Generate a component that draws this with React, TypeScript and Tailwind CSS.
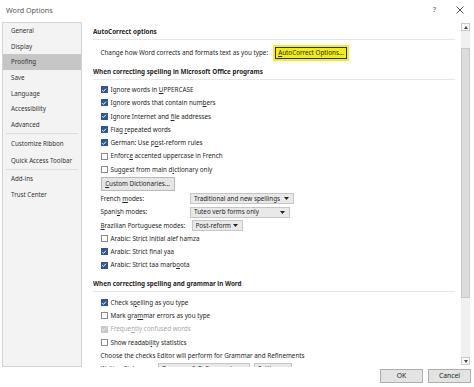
import React from 'react';

const font = { fontFamily: '"Noto Sans", "Open Sans", sans-serif' };

function U({ children }: { children: React.ReactNode }) {
  return <span className="underline underline-offset-[1px]">{children}</span>;
}

function Check({ checked, disabled }: { checked?: boolean; disabled?: boolean }) {
  if (checked) {
    return (
      <span
        className={`flex h-[7px] w-[7px] shrink-0 items-center justify-center ${
          disabled ? 'bg-[#c9c9c9]' : 'bg-[#2b5797]'
        }`}
      >
        <svg width="6" height="6" viewBox="0 0 10 10">
          <path d="M2 5.2 L4.2 7.3 L8.2 2.8" fill="none" stroke={disabled ? '#f2f2f2' : '#ffffff'} strokeWidth="1.6" />
        </svg>
      </span>
    );
  }
  return <span className="h-[7px] w-[7px] shrink-0 border border-[#8a8a8a] bg-white" />;
}

function Row({ checked, disabled, children }: { checked?: boolean; disabled?: boolean; children: React.ReactNode }) {
  return (
    <div className={`flex h-[13.3px] items-center gap-[3px] whitespace-nowrap pl-[7.5px] ${disabled ? 'text-[#a8a8a8]' : ''}`}>
      <Check checked={checked} disabled={disabled} />
      <span>{children}</span>
    </div>
  );
}

function Select({ label, value, left, width }: { label: React.ReactNode; value: string; left: string; width: string }) {
  return (
    <div className="flex h-[13.3px] items-center whitespace-nowrap pl-[7.5px]">
      <span className={left}>{label}</span>
      <div className={`flex h-[11px] items-center justify-between border border-[#c6c6c6] bg-[#e9e9e9] pl-[3px] pr-[4px] ${width}`}>
        <span className="overflow-hidden">{value}</span>
        <svg width="5" height="3" viewBox="0 0 5 3" className="shrink-0">
          <path d="M0 0 L5 0 L2.5 3 Z" fill="#222" />
        </svg>
      </div>
    </div>
  );
}

const navTop = ['General', 'Display', 'Proofing', 'Save', 'Language', 'Accessibility', 'Advanced'];

export default function App() {
  return (
    <div className="h-[387px] w-[474px] overflow-hidden bg-white text-[6.3px] text-[#262626]" style={font}>
      {/* title bar */}
      <div className="flex h-[20px] items-center justify-between pl-[6px] pr-[10px] text-[7.2px] text-[#555]">
        <span>Word Options</span>
        <div className="flex items-center gap-[20px]">
          <span className="text-[7.5px]">?</span>
          <svg width="8" height="8" viewBox="0 0 8 8">
            <path d="M0.5 0.5 L7.5 7.5 M7.5 0.5 L0.5 7.5" stroke="#444" strokeWidth="0.9" />
          </svg>
        </div>
      </div>

      <div className="flex h-[347px]">
        {/* nav */}
        <div className="ml-[2px] mt-[2px] h-[345px] w-[80px] shrink-0 whitespace-nowrap border border-[#d4d4d4] bg-[#f3f3f3] text-[6.2px] text-[#333]">
          {navTop.map(item => (
            <div
              key={item}
              className={`flex h-[15.6px] items-center pl-[8px] ${item === 'Proofing' ? 'bg-[#c6c6c6]' : ''}`}
            >
              {item}
            </div>
          ))}
          <div className="mx-[3px] my-[1px] border-t border-[#dedede]" />
          <div className="flex h-[16.8px] items-center pl-[8px]">Customize Ribbon</div>
          <div className="flex h-[16.8px] items-center pl-[8px]">Quick Access Toolbar</div>
          <div className="mx-[3px] border-t border-[#dedede]" />
          <div className="flex h-[16.8px] items-center pl-[8px]">Add-ins</div>
          <div className="flex h-[16.8px] items-center pl-[8px]">Trust Center</div>
        </div>

        {/* content */}
        <div className="ml-[11px] h-[347px] w-[362px] shrink-0 overflow-hidden">
          <div className="mt-[5px] flex h-[14px] items-center font-bold">AutoCorrect options</div>
          <div className="border-t border-[#e6e6e6]" />
          <div className="mt-[4px] flex h-[17px] items-center whitespace-nowrap pl-[7.5px]">
            <span className="mr-[5px]">Change how Word corrects and formats text as you type:</span>
            <div className="flex h-[16px] w-[76px] items-center bg-[#f4f01e] p-[2px]">
              <div className="flex h-full w-full items-center justify-center border border-[#2a2a1a] bg-[#f2ee10]">
                <span>
                  <U>A</U>utoCorrect Options...
                </span>
              </div>
            </div>
          </div>

          <div className="mt-[4px] flex h-[14px] items-center font-bold">When correcting spelling in Microsoft Office programs</div>
          <div className="border-t border-[#e6e6e6]" />
          <div className="mt-[3px]">
            <Row checked>
              Ignore words in <U>U</U>PPERCASE
            </Row>
            <Row checked>
              Ignore words that contain num<U>b</U>ers
            </Row>
            <Row checked>
              Ignore Internet and <U>f</U>ile addresses
            </Row>
            <Row checked>
              Flag <U>r</U>epeated words
            </Row>
            <Row checked>
              German: Use p<U>o</U>st-reform rules
            </Row>
            <Row>
              Enforc<U>e</U> accented uppercase in French
            </Row>
            <Row>
              Suggest from main d<U>i</U>ctionary only
            </Row>
          </div>
          <div className="mt-[1px] pl-[7.5px]">
            <div className="flex h-[14px] w-[74px] items-center justify-center whitespace-nowrap border border-[#b9b9b9] bg-[#e6e6e6]">
              <span>
                <U>C</U>ustom Dictionaries...
              </span>
            </div>
          </div>
          <div className="mt-[1px]">
            <Select
              label={
                <>
                  French <U>m</U>odes:
                </>
              }
              value="Traditional and new spellings"
              left="w-[89.5px]"
              width="w-[104px]"
            />
            <Select
              label={
                <>
                  Spani<U>s</U>h modes:
                </>
              }
              value="Tuteo verb forms only"
              left="w-[89.5px]"
              width="w-[100px]"
            />
            <Select
              label={
                <>
                  <U>B</U>razilian Portuguese modes:
                </>
              }
              value="Post-reform"
              left="w-[91px]"
              width="w-[51px]"
            />
            <Row>Arabic: Strict initial alef hamza</Row>
            <Row checked>Arabic: Strict final yaa</Row>
            <Row checked>
              Arabic: Strict taa marb<U>o</U>ota
            </Row>
          </div>

          <div className="mt-[5px] flex h-[14px] items-center font-bold">When correcting spelling and grammar in Word</div>
          <div className="border-t border-[#e6e6e6]" />
          <div className="mt-[4px]">
            <Row checked>
              Check s<U>p</U>elling as you type
            </Row>
            <Row>
              Mark gra<U>m</U>mar errors as you type
            </Row>
            <Row checked disabled>
              Freque<U>n</U>tly confused words
            </Row>
            <Row>
              Show readabi<U>l</U>ity statistics
            </Row>
            <div className="flex h-[13.3px] items-center whitespace-nowrap pl-[7.5px]">
              Choose the checks Editor will perform for Grammar and Refinements
            </div>
            <div className="flex h-[13.3px] items-center whitespace-nowrap pl-[7.5px]">
              <span className="w-[57px]">Writing Style:</span>
              <div className="flex h-[11px] w-[92px] items-center justify-between border border-[#c6c6c6] bg-[#e9e9e9] pl-[3px] pr-[4px]">
                <span>Grammar &amp; Refinements</span>
                <span>▾</span>
              </div>
              <div className="ml-[4px] flex h-[11px] w-[38px] items-center justify-center border border-[#c6c6c6] bg-[#e9e9e9]">
                Settings...
              </div>
            </div>
          </div>
        </div>

        {/* scrollbar */}
        <div className="ml-[6px] mt-[3px] flex h-[342px] w-[9px] shrink-0 flex-col bg-[#f0f0f0]">
          <div className="flex h-[8px] items-center justify-center border border-[#c9c9c9] bg-[#f7f7f7]">
            <svg width="4" height="3" viewBox="0 0 4 3">
              <path d="M0 3 L4 3 L2 0 Z" fill="#444" />
            </svg>
          </div>
          <div className="mt-[17px] h-[250px] border border-[#c8c8c8] bg-[#dcdcdc]" />
          <div className="flex-1" />
          <div className="flex h-[8px] items-center justify-center border border-[#c9c9c9] bg-[#f7f7f7]">
            <svg width="4" height="3" viewBox="0 0 4 3">
              <path d="M0 0 L4 0 L2 3 Z" fill="#444" />
            </svg>
          </div>
        </div>
      </div>

      {/* footer */}
      <div className="flex justify-end gap-[5px] pr-[3px] pt-[2px] text-[6.8px]">
        <div className="flex h-[14px] w-[43px] items-center justify-center border border-[#adadad] bg-[#e3e3e3]">OK</div>
        <div className="flex h-[14px] w-[43px] items-center justify-center border border-[#adadad] bg-[#e3e3e3]">Cancel</div>
      </div>
    </div>
  );
}
